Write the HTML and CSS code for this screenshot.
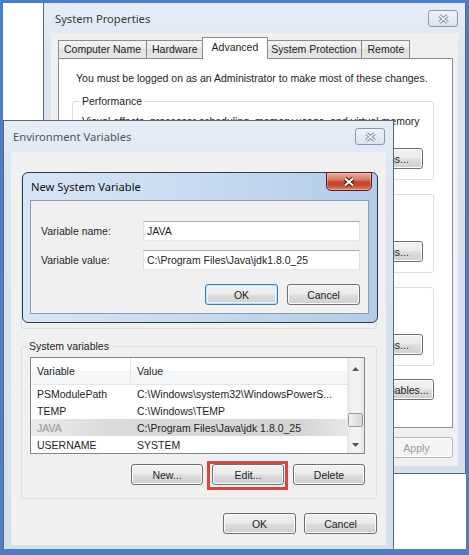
FILE: index.html
```html
<!DOCTYPE html>
<html lang="en">
<head>
    <meta charset="UTF-8">
    <meta name="viewport" content="width=device-width, initial-scale=1.0">
    <title>Environment Variables</title>
    <link rel="stylesheet" href="styles.css">
</head>
<body>
    <div class="screen">

        <!-- System Properties (behind) -->
        <div class="window sysprops">
            <div class="titlebar">
                <span class="title">System Properties</span>
                <span class="close-btn">
                    <svg width="13" height="10" viewBox="0 0 13 10"><path class="x-outline" d="M2.5 1.5L10.5 8.5M10.5 1.5L2.5 8.5"/><path class="x-fill" d="M2.5 1.5L10.5 8.5M10.5 1.5L2.5 8.5"/></svg>
                </span>
            </div>
            <div class="client">
                <div class="tabs">
                    <div class="tab">Computer Name</div>
                    <div class="tab">Hardware</div>
                    <div class="tab selected">Advanced</div>
                    <div class="tab">System Protection</div>
                    <div class="tab">Remote</div>
                </div>
                <div class="tab-panel">
                    <p class="note">You must be logged on as an Administrator to make most of these changes.</p>
                    <fieldset class="group first">
                        <legend>Performance</legend>
                        <p>Visual effects, processor scheduling, memory usage, and virtual memory</p>
                        <div class="group-actions"><button class="btn">Settings...</button></div>
                    </fieldset>
                    <fieldset class="group">
                        <legend>User Profiles</legend>
                        <p>Desktop settings related to your logon</p>
                        <div class="group-actions"><button class="btn">Settings...</button></div>
                    </fieldset>
                    <fieldset class="group">
                        <legend>Startup and Recovery</legend>
                        <p>System startup, system failure, and debugging information</p>
                        <div class="group-actions"><button class="btn">Settings...</button></div>
                    </fieldset>
                    <button class="btn btn-wide">Environment Variables...</button>
                </div>
                <div class="actions">
                    <button class="btn">OK</button>
                    <button class="btn">Cancel</button>
                    <button class="btn" disabled>Apply</button>
                </div>
            </div>
        </div>

        <!-- Environment Variables -->
        <div class="window envvars">
            <div class="titlebar">
                <span class="title">Environment Variables</span>
                <span class="close-btn">
                    <svg width="13" height="10" viewBox="0 0 13 10"><path class="x-outline" d="M2.5 1.5L10.5 8.5M10.5 1.5L2.5 8.5"/><path class="x-fill" d="M2.5 1.5L10.5 8.5M10.5 1.5L2.5 8.5"/></svg>
                </span>
            </div>
            <div class="client">
                <!-- user variables group sits under the dialog -->
                <div class="group user-vars"></div>

                <fieldset class="group sys-vars">
                    <legend>System variables</legend>
                    <div class="list">
                        <div class="list-main">
                            <div class="list-head"><span class="col-name">Variable</span><span class="col-value">Value</span></div>
                            <div class="list-row"><span class="col-name">PSModulePath</span><span class="col-value">C:\Windows\system32\WindowsPowerS...</span></div>
                            <div class="list-row"><span class="col-name">TEMP</span><span class="col-value">C:\Windows\TEMP</span></div>
                            <div class="list-row blurred"><span class="col-name">JAVA</span><span class="col-value">C:\Program Files\Java\jdk 1.8.0_25</span></div>
                            <div class="list-row"><span class="col-name">USERNAME</span><span class="col-value">SYSTEM</span></div>
                        </div>
                        <div class="scrollbar">
                            <div class="scroll-arrow up"><svg width="7" height="4" viewBox="0 0 7 4"><path d="M0 4L3.5 0L7 4Z"/></svg></div>
                            <div class="scroll-track"><div class="scroll-thumb"></div></div>
                            <div class="scroll-arrow down"><svg width="7" height="4" viewBox="0 0 7 4"><path d="M0 0L3.5 4L7 0Z"/></svg></div>
                        </div>
                    </div>
                    <div class="list-actions">
                        <button class="btn">New...</button>
                        <button class="btn highlight">Edit...</button>
                        <button class="btn">Delete</button>
                    </div>
                </fieldset>

                <div class="actions">
                    <button class="btn">OK</button>
                    <button class="btn">Cancel</button>
                </div>
            </div>
        </div>

        <!-- New System Variable (active) -->
        <div class="window newvar">
            <div class="titlebar">
                <span class="title">New System Variable</span>
                <span class="close-btn danger">
                    <svg width="14" height="10" viewBox="0 0 14 10"><path class="x-outline" d="M3 1.5L11 8.5M11 1.5L3 8.5"/><path class="x-fill" d="M3 1.5L11 8.5M11 1.5L3 8.5"/></svg>
                </span>
            </div>
            <div class="client">
                <div class="form">
                    <label for="var-name">Variable name:</label>
                    <input class="field" id="var-name" type="text" value="JAVA">
                    <label for="var-value">Variable value:</label>
                    <input class="field" id="var-value" type="text" value="C:\Program Files\Java\jdk1.8.0_25">
                </div>
                <div class="actions">
                    <button class="btn default">OK</button>
                    <button class="btn">Cancel</button>
                </div>
            </div>
        </div>

    </div>
</body>
</html>
```

FILE: styles.css
```css
* {
    box-sizing: border-box;
}

body {
    margin: 0;
    background: #fff;
    font-family: "Liberation Sans", Arial, sans-serif;
    font-size: 10.5px;
    color: #1e1e1e;
}

.screen {
    position: relative;
    width: 469px;
    height: 555px;
    border: solid #4d7dca;
    border-width: 3px 3px 6px 3px;
    background: #fff;
    overflow: hidden;
}

/* windows */
.window {
    position: absolute;
    display: flex;
    flex-direction: column;
    padding: 0 7px 7px 7px;
    border: 1px solid #5f6773;
    background: linear-gradient(#e6edf7, #dae5f1 60px, #d3dfed);
}
.sysprops {
    left: 40px;
    top: -2px;
    width: 423px;
    height: 473px;
}
.envvars {
    left: 0;
    top: 117px;
    width: 391px;
    height: 433px;
}
.newvar {
    left: 19px;
    top: 169px;
    width: 356px;
    padding: 0 8px 8px 7px;
    border-color: #2f3b4c;
    border-radius: 6px;
    background: linear-gradient(90deg, #d7e6f5, #c5d9ef 55%, #b3cce9);
}

.titlebar {
    display: flex;
    align-items: center;
    flex: none;
    height: 31px;
}
.title {
    font-family: "Noto Sans", sans-serif;
    font-size: 11.2px;
    color: #3a3a3a;
    white-space: nowrap;
}
.sysprops .titlebar {
    padding: 2px 0 0 4px;
}
.envvars .titlebar {
    padding-left: 2px;
}
.envvars .title {
    color: #555;
}
.newvar .titlebar {
    height: 27px;
    padding-left: 1px;
}
.newvar .title {
    color: #111;
}

.close-btn {
    display: flex;
    align-items: center;
    justify-content: center;
    width: 30px;
    height: 17px;
    margin-left: auto;
    border: 1px solid #8797af;
    border-radius: 3px;
    background: linear-gradient(#f0f3f8, #dbe3ee);
}
.envvars .close-btn {
    margin-right: 1px;
}
.x-outline,
.x-fill {
    fill: none;
}
.close-btn .x-outline {
    stroke: #7d8ca2;
    stroke-width: 3.6;
}
.close-btn .x-fill {
    stroke: #f6f8fb;
    stroke-width: 1.6;
}
.close-btn.danger {
    align-self: flex-start;
    width: 46px;
    height: 19px;
    margin: -1px -3px 0 auto;
    border-color: #5a1f16;
    border-radius: 0 0 5px 5px;
    background: linear-gradient(#e9ab9d, #d77c68 40%, #c5452f 52%, #c5452f 70%, #d98470);
    box-shadow: inset 0 0 0 1px rgba(255, 255, 255, 0.3);
}
.close-btn.danger .x-outline {
    stroke: #4a1810;
    stroke-width: 4.2;
}
.close-btn.danger .x-fill {
    stroke: #fff;
    stroke-width: 2.2;
}

.client {
    display: flex;
    flex-direction: column;
    flex: 1;
    min-height: 0;
    background: #f0f0f0;
}
.sysprops .client {
    padding: 4px 5px 0 7px;
}
.envvars .client {
    padding: 22px 9px 0 10px;
}
.newvar .client {
    padding: 20px 8px 8px 10px;
    border: 1px solid #8c9cb3;
}

/* tabs */
.tabs {
    display: flex;
    flex: none;
    height: 21px;
}
.tab {
    height: 18px;
    margin-top: 3px;
    margin-left: -1px;
    padding: 0 5px;
    line-height: 17px;
    border: 1px solid #898c95;
    border-bottom: none;
    background: linear-gradient(#f3f3f3, #ebebeb 50%, #e0e0e0 50%, #e7e7e7);
    white-space: nowrap;
}
.tab:first-child {
    margin-left: 0;
}
.tab.selected {
    position: relative;
    z-index: 1;
    height: 22px;
    margin: 0 -2px -1px;
    padding: 0 9px;
    line-height: 19px;
    background: #fff;
}
.tab-panel {
    display: flex;
    flex-direction: column;
    flex: none;
    height: 370px;
    padding: 0 18px 0 13px;
    border: 1px solid #898c95;
    background: #fff;
}
.note {
    margin: 12px 0 0 4px;
    line-height: 14px;
    white-space: nowrap;
}

/* group boxes */
.group {
    min-width: 0;
    margin: 7px 0 0;
    padding: 6px 10px 10px 9px;
    border: 1px solid #d5dfe5;
    border-radius: 3px;
}
.group.first {
    margin-top: 9px;
}
.group legend {
    margin-left: -2px;
    padding: 0 2px;
    line-height: 14px;
}
.group p {
    margin: 0;
    line-height: 14px;
    white-space: nowrap;
}
.group-actions {
    display: flex;
    justify-content: flex-end;
    margin-top: 20px;
}

/* buttons */
.btn {
    width: 73px;
    height: 21px;
    padding: 0;
    font: inherit;
    color: #1e1e1e;
    border: 1px solid #707070;
    border-radius: 3px;
    background: linear-gradient(#f2f2f2, #ebebeb 48%, #dddddd 52%, #cfcfcf);
    box-shadow: inset 0 0 0 1px #fcfcfc;
    white-space: nowrap;
}
.group .btn {
    width: 75px;
}
.btn-wide {
    align-self: flex-end;
    width: 120px;
    margin-top: 13px;
    padding-right: 8px;
}
.btn:disabled {
    color: #9c9c9c;
    border-color: #b5b5b5;
    background: #f4f4f4;
}
.btn.default {
    border-color: #3c7fb1;
    box-shadow: inset 0 0 0 1px #b9e2f8, inset 0 0 0 2px #e6f5fd;
}
.actions {
    display: flex;
    justify-content: flex-end;
    gap: 6px;
    margin-top: 9px;
}

/* environment variables */
.envvars .group {
    margin: 0;
    padding: 4px 11px 13px 8px;
}
.envvars .group legend {
    margin-left: -3px;
}
.user-vars {
    flex: none;
    height: 155px;
}
.envvars .sys-vars {
    margin-top: 10px;
}
.envvars .actions {
    gap: 8px;
    margin-top: 14px;
}

.list {
    display: flex;
    height: 97px;
    border: 1px solid #828790;
    background: #fff;
}
.list-main {
    flex: 1;
    min-width: 0;
    overflow: hidden;
}
.list-head,
.list-row {
    display: flex;
    white-space: nowrap;
}
.list-head {
    height: 27px;
    border-bottom: 1px solid #e5e5e5;
    background: linear-gradient(#fff 50%, #f5f6f8 50%);
}
.list-head span {
    display: flex;
    align-items: center;
}
.list-head .col-name {
    border-right: 1px solid #e5e5e5;
}
.list-row {
    align-items: center;
    height: 17px;
}
.col-name {
    flex: none;
    width: 100px;
    padding-left: 6px;
}
.col-value {
    padding-left: 6px;
}
.list-row.blurred {
    background: linear-gradient(90deg, #ececec, #dadada 25%, #d4d4d4 85%, #e8e8e8);
}
.list-row.blurred .col-name {
    color: #a3a3a3;
    text-shadow: 0 0 1px #bbb;
}

.scrollbar {
    display: flex;
    flex-direction: column;
    flex: none;
    width: 17px;
    background: linear-gradient(90deg, #e6e6e6, #f3f3f3 30%, #f3f3f3 70%, #e6e6e6);
}
.scroll-arrow {
    display: flex;
    align-items: center;
    justify-content: center;
    height: 17px;
}
.scroll-arrow path {
    fill: #555;
}
.scroll-arrow.up {
    padding-top: 5px;
}
.scroll-track {
    flex: 1;
}
.scroll-thumb {
    height: 14px;
    margin: 38px 1px 0;
    border: 1px solid #989898;
    border-radius: 2px;
    background: linear-gradient(90deg, #f4f4f4, #e3e3e3 50%, #d6d6d6);
}

.list-actions {
    display: flex;
    justify-content: flex-end;
    gap: 9px;
    margin-top: 10px;
}
.list-actions .btn {
    width: 72px;
}
.highlight {
    position: relative;
}
.highlight::after {
    content: "";
    position: absolute;
    top: -4px;
    right: -5px;
    bottom: -6px;
    left: -6px;
    border: 3px solid #d8473f;
}

/* new system variable */
.form {
    display: grid;
    grid-template-columns: 102px 217px;
    row-gap: 9px;
    align-items: center;
}
.form label {
    white-space: nowrap;
}
.field {
    width: 217px;
    height: 20px;
    margin: 0;
    padding: 0 3px;
    font: inherit;
    color: #1e1e1e;
    border: 1px solid #dbdfe6;
    border-top-color: #abadb3;
    border-bottom-color: #e3e9ef;
    background: #fff;
}
.newvar .actions {
    gap: 9px;
    margin-top: 14px;
}
```
